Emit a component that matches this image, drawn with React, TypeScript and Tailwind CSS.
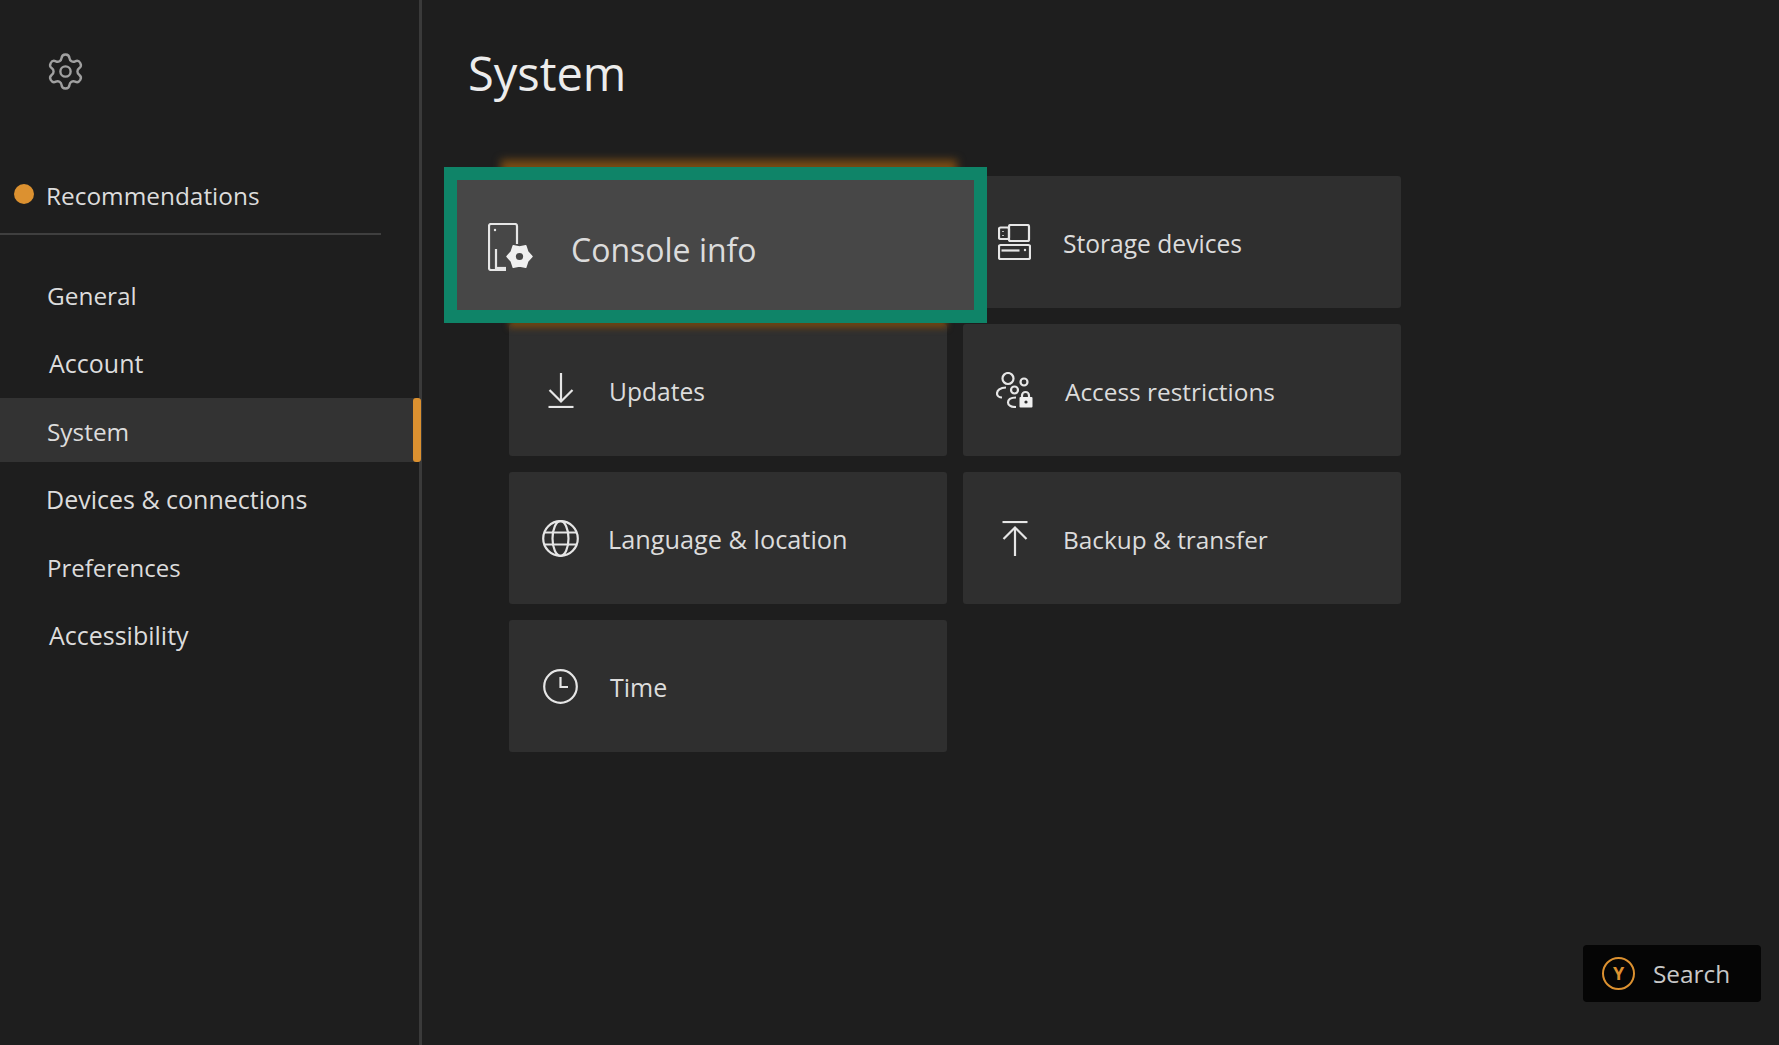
import { Settings } from "lucide-react";
import type { ReactNode } from "react";

const fontStack = { fontFamily: '"Open Sans", "Noto Sans", sans-serif' };

const navItems = [
  { label: "General", cls: "pl-[47px] text-[24.4px]" },
  { label: "Account", cls: "pl-[49px] text-[25px]" },
  { label: "System", cls: "pl-[47px] text-[24.4px]" },
  { label: "Devices & connections", cls: "pl-[46px] text-[25px]" },
  { label: "Preferences", cls: "pl-[47px] text-[24px]" },
  { label: "Accessibility", cls: "pl-[49px] text-[25px]" },
];

// six point gear used on the console tile
const gearPoints = Array.from({ length: 12 }, (_, i) => {
  const r = i % 2 === 0 ? 12.5 : 9.5;
  const a = (Math.PI / 6) * i;
  return `${(31.5 + r * Math.cos(a)).toFixed(2)},${(33.5 + r * Math.sin(a)).toFixed(2)}`;
}).join(" ");

function ConsoleIcon() {
  return (
    <svg width="45" height="48" viewBox="0 0 45 48" fill="none" stroke="#e6e6e6" strokeWidth="2.2">
      <path d="M29 21V3a2 2 0 0 0-2-2H3a2 2 0 0 0-2 2v42a2 2 0 0 0 2 2h15" />
      <path d="M8 26v21" />
      <path d="M8 45h10" />
      <circle cx="7" cy="7" r="1.2" fill="#e6e6e6" stroke="none" />
      <polygon points={gearPoints} fill="#f0f0f0" stroke="#f0f0f0" strokeWidth="1.5" strokeLinejoin="round" />
      <circle cx="31.5" cy="33.5" r="3.6" fill="#474747" stroke="none" />
    </svg>
  );
}

function StorageIcon() {
  return (
    <svg width="33" height="36" viewBox="0 0 33 36" fill="none" stroke="#e6e6e6" strokeWidth="2.2">
      <rect x="1" y="3.5" width="10" height="11.5" rx="1.5" />
      <rect x="11" y="1" width="20" height="16" rx="1.5" />
      <rect x="1" y="21" width="31" height="14" rx="1.5" />
      <path d="M3.5 26.5h18" />
      <circle cx="27" cy="26" r="1.2" fill="#e6e6e6" stroke="none" />
      <path d="M5 7v1M5 11v1" strokeWidth="1.5" />
    </svg>
  );
}

function AccessIcon() {
  return (
    <svg width="37" height="36" viewBox="0 0 37 36" fill="none" stroke="#e6e6e6" strokeWidth="2.2">
      <circle cx="12" cy="6.5" r="5.5" />
      <circle cx="28" cy="10" r="3.5" />
      <circle cx="18.5" cy="18" r="3.5" />
      <path d="M10 15.5C4 15.5 1 18.5 1 21.5C1 24 3.5 25.5 6 25.5" />
      <path d="M20 25.5C15 25.5 12 27.5 12 30.5C12 33 15 35 20 35" />
      <path d="M26 26v-2.5a3.5 3.5 0 0 1 7 0V26" />
      <rect x="23.5" y="25" width="13" height="10.5" rx="1" fill="#f0f0f0" stroke="none" />
      <circle cx="30" cy="30" r="1.6" fill="#2f2f2f" stroke="none" />
    </svg>
  );
}

function DownloadIcon() {
  return (
    <svg width="26" height="35" viewBox="0 0 26 35" fill="none" stroke="#e6e6e6" strokeWidth="2.2">
      <path d="M13 0v28" />
      <path d="M1.5 17L13 28.5L24.5 17" />
      <path d="M0.5 34h25" />
    </svg>
  );
}

function UploadIcon() {
  return (
    <svg width="26" height="35" viewBox="0 0 26 35" fill="none" stroke="#e6e6e6" strokeWidth="2.2">
      <path d="M13 35V7" />
      <path d="M1.5 18L13 6.5L24.5 18" />
      <path d="M0.5 1h25" />
    </svg>
  );
}

function GlobeIcon() {
  return (
    <svg width="37" height="37" viewBox="0 0 37 37" fill="none" stroke="#e6e6e6" strokeWidth="2.2">
      <circle cx="18.5" cy="18.5" r="17.3" />
      <ellipse cx="18.5" cy="18.5" rx="8" ry="17.3" />
      <path d="M3 12.5h31M3 24.5h31" />
    </svg>
  );
}

function ClockIcon() {
  return (
    <svg width="35" height="35" viewBox="0 0 35 35" fill="none" stroke="#e6e6e6" strokeWidth="2.2">
      <circle cx="17.5" cy="17.5" r="16.3" />
      <path d="M17.5 8v10h7.5" />
    </svg>
  );
}

function Tile({ icon, label, textClass }: { icon: ReactNode; label: string; textClass: string }) {
  return (
    <div className="relative flex items-center rounded-[3px] bg-[#2f2f2f]">
      <div className="ml-[31px] flex w-[41px] justify-center">{icon}</div>
      <span className={`pt-[4px] text-[#dcdcdc] ${textClass}`}>{label}</span>
    </div>
  );
}

export default function App() {
  return (
    <div className="flex h-screen overflow-hidden bg-[#1e1e1e]" style={fontStack}>
      {/* Left menu */}
      <aside className="flex w-[422px] shrink-0 flex-col border-r-[3px] border-[#3a3a3a] pt-[51px]">
        <Settings className="ml-[45px] h-[41px] w-[41px] text-[#a0a0a0]" strokeWidth={1.4} />
        <div className="mt-[84px] flex h-[40px] w-[381px] items-center box-content border-b-2 border-[#3f3f3f] pb-[17px]">
          <span className="mb-[4px] ml-[14px] h-5 w-5 rounded-full bg-[#dc9130]" />
          <span className="ml-[12px] text-[24.4px] text-[#dcdcdc]">Recommendations</span>
        </div>
        <nav className="mt-[27px] flex flex-col gap-1">
          {navItems.map((item) =>
            item.label === "System" ? (
              <div key={item.label} className="-mr-[2px] flex h-16 items-center justify-between bg-[#333333]">
                <span className={`pt-[4px] text-[#dcdcdc] ${item.cls}`}>{item.label}</span>
                <span className="h-16 w-[8px] rounded-[3px] bg-[#dc9130]" />
              </div>
            ) : (
              <div key={item.label} className={`flex h-16 items-center pt-[4px] text-[#dcdcdc] ${item.cls}`}>
                {item.label}
              </div>
            )
          )}
        </nav>
      </aside>

      {/* Main content */}
      <main className="flex min-w-0 flex-1 flex-col">
        <div className="h-[176px] pl-[46px] pt-[45px]">
          <h1 className="text-[47px] leading-[56px] text-[#ececec]">System</h1>
        </div>

        <div className="ml-[87px] grid grid-cols-[438px_438px] auto-rows-[132px] gap-4">
          <div className="relative z-10 rounded-[3px] bg-[#2f2f2f]">
            {/* focus glow and enlarged tile */}
            <div className="absolute -left-[8px] -top-[16px] h-[24px] w-[456px] bg-[#7a4c14] blur-[4px]" />
            <div className="absolute -bottom-[20px] left-0 h-[24px] w-[438px] bg-[#6e4514] blur-[3px]" />
            <div className="absolute -left-[65px] -top-[9px] flex h-[156px] w-[543px] items-center border-[13px] border-[#0f8468] bg-[#474747]">
              <div className="ml-[31px] mt-[4px] flex">
                <ConsoleIcon />
              </div>
              <span className="ml-[38px] pt-[9px] text-[32px] text-[#dcdcdc]">Console info</span>
            </div>
          </div>
          <Tile icon={<StorageIcon />} label="Storage devices" textClass="ml-[28px] text-[24.6px]" />
          <Tile icon={<DownloadIcon />} label="Updates" textClass="ml-[28px] text-[24.6px]" />
          <Tile icon={<AccessIcon />} label="Access restrictions" textClass="ml-[30px] text-[24.4px]" />
          <Tile icon={<GlobeIcon />} label="Language & location" textClass="ml-[27px] text-[25.3px]" />
          <Tile icon={<UploadIcon />} label="Backup & transfer" textClass="ml-[28px] text-[24.4px]" />
          <Tile icon={<ClockIcon />} label="Time" textClass="ml-[29px] text-[25px]" />
        </div>

        <div className="mb-[43px] mr-[18px] mt-auto flex h-[57px] w-[178px] items-center self-end rounded-[4px] bg-[#050505]">
          <span className="ml-[19px] flex h-[33px] w-[33px] items-center justify-center rounded-full border-2 border-[#dc9130] text-[18px] font-bold text-[#dc9130]">
            Y
          </span>
          <span className="ml-[18px] pt-[2px] text-[24.4px] text-[#c8c8c8]">Search</span>
        </div>
      </main>
    </div>
  );
}
